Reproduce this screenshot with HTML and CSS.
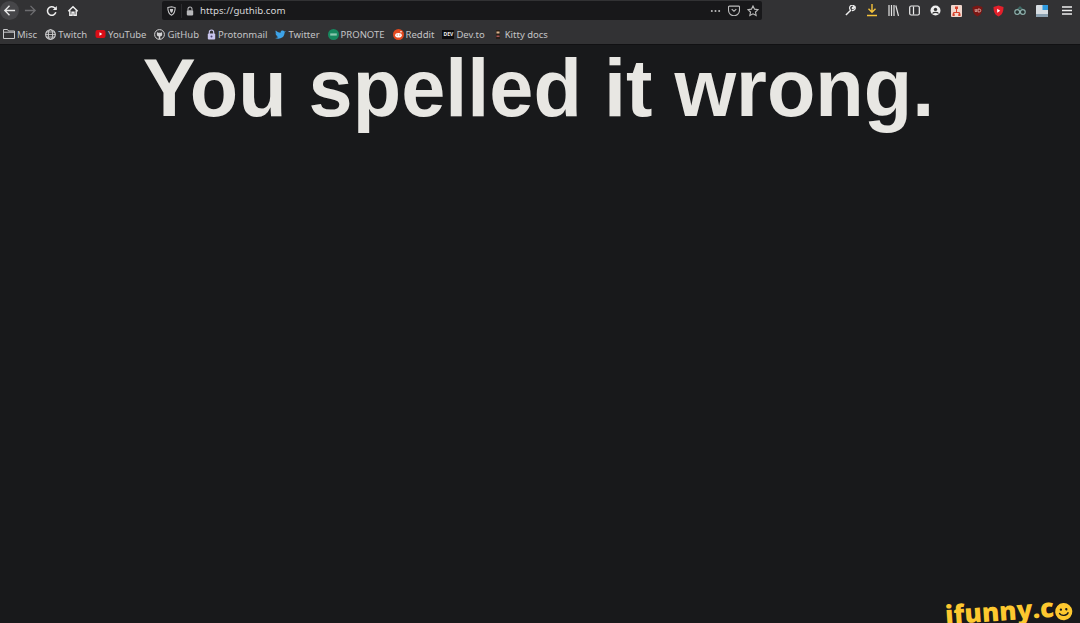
FILE: index.html
```html
<!DOCTYPE html>
<html lang="en">
<head>
  <meta charset="UTF-8" />
  <title>You spelled it wrong.</title>
  <link rel="stylesheet" href="styles.css">
</head>
<body>
  <header class="browser">
    <!-- top row -->
    <div class="nav-row">
      <div class="nav-buttons">
        <span class="back">
          <svg width="13" height="13" viewBox="0 0 14 14"><path d="M13 7H2M7 2L2 7l5 5" fill="none" stroke="#e8e8e8" stroke-width="1.5"/></svg>
        </span>
        <svg class="nav-icon" width="13" height="13" viewBox="0 0 14 14"><path d="M1 7h11M7 2l5 5-5 5" fill="none" stroke="#6d6d70" stroke-width="1.4"/></svg>
        <svg class="nav-icon" width="12" height="12" viewBox="0 0 14 14"><path d="M11.5 8.5A5 5 0 1 1 10 3.2L12 5" fill="none" stroke="#eee" stroke-width="1.8"/><path d="M12.6 1.2v4.6H8z" fill="#eee"/></svg>
        <svg class="nav-icon" width="12" height="12" viewBox="0 0 14 14"><path d="M1.5 7.2L7 2l5.500 5.200M3.300 6.500V12h2.600V8.500h2.200V12h2.600V6.500" fill="none" stroke="#eee" stroke-width="1.700"/></svg>
      </div>
      <div class="urlbar">
        <svg class="shield" width="9" height="10" viewBox="0 0 11 12"><path d="M1 1.800L5.500 .8 10 1.800c0 4.500-1.200 7.800-4.500 9.400C2.200 9.600 1 6.300 1 1.800z" fill="none" stroke="#c9c9cb" stroke-width="1.300"/><path d="M3.500 3.500h4c0 2.500-.8 4-2 4.800-1.200-.8-2-2.300-2-4.800z" fill="#c9c9cb"/></svg>
        <span class="url-sep"></span>
        <svg class="lock" width="8" height="10" viewBox="0 0 10 12"><path d="M2.500 5V3.500a2.500 2.500 0 0 1 5 0V5" fill="none" stroke="#b8b8ba" stroke-width="1.300"/><rect x="1" y="5" width="8" height="6.500" rx="1" fill="#b8b8ba"/></svg>
        <span class="url-text">https://guthib.com</span>
        <span class="url-actions">
          <svg width="11" height="4" viewBox="0 0 12 4"><circle cx="2" cy="2" r="1.100" fill="#bbb"/><circle cx="6" cy="2" r="1.100" fill="#bbb"/><circle cx="10" cy="2" r="1.100" fill="#bbb"/></svg>
          <svg width="12" height="11" viewBox="0 0 13 12"><path d="M1.500 1h10a1 1 0 0 1 1 1v3.500a6 6 0 0 1-12 0V2a1 1 0 0 1 1-1z" transform="translate(0 .2)" fill="none" stroke="#bbb" stroke-width="1.200"/><path d="M4 4.500l2.500 2.300L9 4.500" fill="none" stroke="#bbb" stroke-width="1.300"/></svg>
          <svg width="12" height="12" viewBox="0 0 13 13"><path d="M6.500 1l1.700 3.500 3.800.5-2.800 2.600.7 3.800-3.400-1.800-3.400 1.800.7-3.800L1 5l3.800-.5z" fill="none" stroke="#bbb" stroke-width="1.200"/></svg>
        </span>
      </div>
      <div class="tools">
        <svg width="11" height="11" viewBox="0 0 12 12"><path d="M1 11L6.500 5.500" fill="none" stroke="#eee" stroke-width="1.600"/><path d="M6 5.500A3 3 0 0 1 10 1L8 3v1h1l2-2a3 3 0 0 1-3.500 4" fill="none" stroke="#eee" stroke-width="1.300"/></svg>
        <svg width="12" height="13" viewBox="0 0 12 13"><path d="M6 0v8M2.500 4.800L6 8.300l3.500-3.500" fill="none" stroke="#f5c33b" stroke-width="1.400"/><path d="M1 11.500h10" stroke="#f5c33b" stroke-width="1.500"/></svg>
        <svg width="11" height="11" viewBox="0 0 11 11"><path d="M1 0v11M3.500 0v11M6 0v11M7.800 .5l2.700 10.500" fill="none" stroke="#e4e4e4" stroke-width="1.200"/></svg>
        <svg width="11" height="11" viewBox="0 0 11 11"><rect x=".7" y="1" width="9.600" height="9" rx="1.500" fill="none" stroke="#eee" stroke-width="1.200"/><path d="M4.500 1.500v8" stroke="#eee" stroke-width="1.200"/></svg>
        <svg width="11" height="11" viewBox="0 0 11 11"><circle cx="5.500" cy="5.500" r="5" fill="#eee"/><circle cx="5.500" cy="4.400" r="1.700" fill="#333"/><path d="M2.500 8.500c1-1.500 5-1.500 6 0" fill="none" stroke="#333" stroke-width="1.300"/></svg>
        <svg width="11" height="12" viewBox="0 0 11 12"><rect width="11" height="12" rx="1" fill="#f0d6cc"/><path d="M5.500 3v4M2.500 10V7.500h6V10" fill="none" stroke="#d8402a" stroke-width="1"/><rect x="4" y="1.500" width="3" height="2.500" fill="#d8402a"/><rect x="1.500" y="8.500" width="2.200" height="2.500" fill="#d8402a"/><rect x="7.300" y="8.500" width="2.200" height="2.500" fill="#d8402a"/></svg>
        <svg width="11" height="12" viewBox="0 0 11 12"><path d="M5.500 .5l5 1.500c0 5-1.500 8-5 9.500C2 10 .5 7 .5 2z" fill="#7a1714"/><path d="M3.200 4v2.500h1.500V4M6 4v3h1.200a1.500 1.500 0 0 0 0-3z" fill="none" stroke="#e8b7b0" stroke-width=".8"/></svg>
        <svg width="11" height="12" viewBox="0 0 11 12"><path d="M5.500 .5l5 1.500c0 5-1.500 8-5 9.500C2 10 .5 7 .5 2z" fill="#e3202b"/><path d="M4.200 3.800l3 2-3 2z" fill="#fff"/></svg>
        <svg width="12" height="10" viewBox="0 0 12 10"><path d="M3 3l3-3 3 3z" fill="#3d6a66"/><circle cx="3.200" cy="6" r="2.400" fill="#24302f" stroke="#8fb0ac" stroke-width="1.200"/><circle cx="8.800" cy="6" r="2.400" fill="#24302f" stroke="#8fb0ac" stroke-width="1.200"/></svg>
        <svg width="12" height="12" viewBox="0 0 12 12"><rect width="12" height="12" rx="1" fill="#d7dde2"/><path d="M0 9h12v2a1 1 0 0 1-1 1H1a1 1 0 0 1-1-1z" fill="#8aa0b0"/><rect x="6.500" width="5.500" height="5" fill="#2f9be0"/></svg>
      </div>
      <svg class="menu" width="10" height="9" viewBox="0 0 10 9"><path d="M0 1h10M0 4.500h10M0 8h10" stroke="#eee" stroke-width="1.300"/></svg>
    </div>

    <!-- bookmarks -->
    <nav class="bookmarks">
      <a class="mark">
        <svg width="12" height="10" viewBox="0 0 12 10"><path d="M.5 9.500V.5h4l1 1.500h6v7.500zM.5 3.200h11" fill="none" stroke="#c9c9cb" stroke-width="1"/></svg>
        Misc
      </a>
      <a class="mark">
        <svg width="11" height="11" viewBox="0 0 11 11"><circle cx="5.500" cy="5.500" r="4.800" fill="none" stroke="#d4d4d6" stroke-width="1.100"/><ellipse cx="5.500" cy="5.500" rx="2.200" ry="4.800" fill="none" stroke="#d4d4d6"/><path d="M.7 5.500h9.600M1.500 3h8M1.500 8h8" stroke="#d4d4d6" stroke-width=".8"/></svg>
        Twitch
      </a>
      <a class="mark">
        <svg width="11" height="8" viewBox="0 0 10 8"><rect width="10" height="8" rx="2" fill="#d90d16"/><path d="M4 2.300L6.800 4 4 5.700z" fill="#fff"/></svg>
        YouTube
      </a>
      <a class="mark">
        <svg width="11" height="11" viewBox="0 0 11 11"><circle cx="5.500" cy="5.500" r="4.900" fill="none" stroke="#d4d4d6" stroke-width="1"/><path d="M3 3l1 .7h3L8 3l.2 2.500c0 1.300-1 1.900-2 2v2.500H4.800V7.500c-1-.1-2-.7-2-2z" fill="#d4d4d6"/></svg>
        GitHub
      </a>
      <a class="mark">
        <svg width="9" height="11" viewBox="0 0 9 11"><path d="M2.300 5V3.200a2.200 2.200 0 0 1 4.400 0V5" fill="none" stroke="#c9c5ee" stroke-width="1.100"/><rect x=".8" y="4.500" width="7.400" height="6" rx="1" fill="#c9c5ee"/><circle cx="4.500" cy="7.500" r="1" fill="#4a4570"/></svg>
        Protonmail
      </a>
      <a class="mark">
        <svg width="11" height="9" viewBox="0 0 11 9"><path d="M0 8c3.500 1.600 9.500.5 9.600-5.500L11 1.200 9.400 1.500C8.400.1 5.400.2 5.500 2.800 3.500 2.700 1.800 1.700.8.500c-.6 1.200-.2 2.400.7 3l-1-.2c0 1 .8 2 1.800 2.200h-1c.3.900 1.100 1.400 2 1.500C2.400 7.800 1.200 8.100 0 8z" fill="#3da3e8"/></svg>
        Twitter
      </a>
      <a class="mark">
        <svg width="11" height="11" viewBox="0 0 10 10"><circle cx="5" cy="5" r="5" fill="#17885f"/><rect x="2" y="4" width="6" height="2" fill="#8cc8b0"/></svg>
        PRONOTE
      </a>
      <a class="mark">
        <svg width="11" height="11" viewBox="0 0 11 11"><circle cx="5.500" cy="5.500" r="5.500" fill="#e2491f"/><ellipse cx="5.500" cy="6.300" rx="3.300" ry="2.300" fill="#fff"/><circle cx="4.200" cy="6" r=".6" fill="#e2491f"/><circle cx="6.800" cy="6" r=".6" fill="#e2491f"/><circle cx="8" cy="2.700" r=".8" fill="#fff"/></svg>
        Reddit
      </a>
      <a class="mark">
        <span class="dev-icon">DEV</span>
        Dev.to
      </a>
      <a class="mark">
        <svg width="10" height="11" viewBox="0 0 10 11"><rect x="3" y="1" width="4" height="9" fill="#2a2019"/><rect x="3.500" y="2.500" width="3" height="2" fill="#d9b38c"/><rect x="3.500" y="6.500" width="3" height="1.500" fill="#a55"/></svg>
        Kitty docs
      </a>
    </nav>
  </header>

  <main class="page">
    <h1 class="headline">You spelled it wrong.</h1>
  </main>

  <div class="watermark">
    <span>ifunny.c</span>
    <svg class="smiley" width="19" height="19" viewBox="0 0 21 21"><circle cx="10.500" cy="10.500" r="9.500" fill="#fdc82f"/><circle cx="7.500" cy="8" r="1.300" fill="#18191b"/><circle cx="13.500" cy="8" r="1.300" fill="#18191b"/><path d="M5.500 11.500c1.500 4 8.500 4 10 0" fill="none" stroke="#18191b" stroke-width="1.400"/></svg>
  </div>
</body>
</html>
```

FILE: styles.css
```css
html, body {
  height: 100%;
  margin: 0;
  overflow: hidden;
}

body {
  background: #18191b;
  font-family: "Liberation Sans", Arial, sans-serif;
  position: relative;
}

.browser {
  height: 45px;
  background: #323234;
  border-bottom: 1px solid #111113;
  box-sizing: border-box;
  font-family: "Noto Sans", "Open Sans", sans-serif;
}

.nav-row {
  height: 21px;
  display: flex;
  align-items: center;
}

.nav-buttons {
  display: flex;
  align-items: center;
  width: 162px;
  flex: none;
}

.back {
  width: 19px;
  height: 19px;
  border-radius: 50%;
  background: #464649;
  display: flex;
  align-items: center;
  justify-content: center;
  margin-right: 5px;
}

.nav-icon {
  margin-right: 9px;
}

.urlbar {
  width: 600px;
  height: 19px;
  flex: none;
  background: #18181a;
  border-radius: 2px;
  display: flex;
  align-items: center;
  padding: 0 3px 0 5px;
  box-sizing: border-box;
}

.url-sep {
  width: 1px;
  height: 14px;
  background: #2c2c2e;
  margin: 0 4px 0 5px;
}

.url-text {
  color: #d6d6d8;
  font-size: 9.7px;
  margin-left: 6px;
}

.url-actions {
  margin-left: auto;
  display: flex;
  align-items: center;
  gap: 7px;
}

.tools {
  display: flex;
  align-items: center;
  gap: 10px;
  margin-left: 83px;
}

.menu {
  margin-left: auto;
  margin-right: 8px;
}

.bookmarks {
  height: 20px;
  padding: 3px 0 0 3px;
  display: flex;
  align-items: center;
  gap: 8px;
}

.mark {
  display: flex;
  align-items: center;
  gap: 2px;
  color: #c4c4c6;
  font-size: 9.5px;
  white-space: nowrap;
}

.dev-icon {
  width: 12px;
  height: 9px;
  background: #0c0c0d;
  color: #eee;
  font-size: 5px;
  font-weight: 700;
  line-height: 9px;
  text-align: center;
}

.page {
  text-align: center;
}

/* the shot is squeezed sideways a bit, so the type is too */
.headline {
  margin: 3px 3px 0 0;
  color: #e8e7e3;
  font-size: 81px;
  font-weight: 700;
  line-height: 81px;
  transform: scaleX(0.979);
}

/* logo sits at a slight tilt in the corner */
.watermark {
  position: absolute;
  right: 7px;
  bottom: 0;
  display: flex;
  align-items: center;
  color: #fdc82f;
  font-family: "Open Sans", sans-serif;
  font-weight: 800;
  font-size: 26px;
  line-height: 26px;
  transform: rotate(-4deg);
}

.smiley {
  align-self: flex-end;
  margin-bottom: -2px;
}
```
